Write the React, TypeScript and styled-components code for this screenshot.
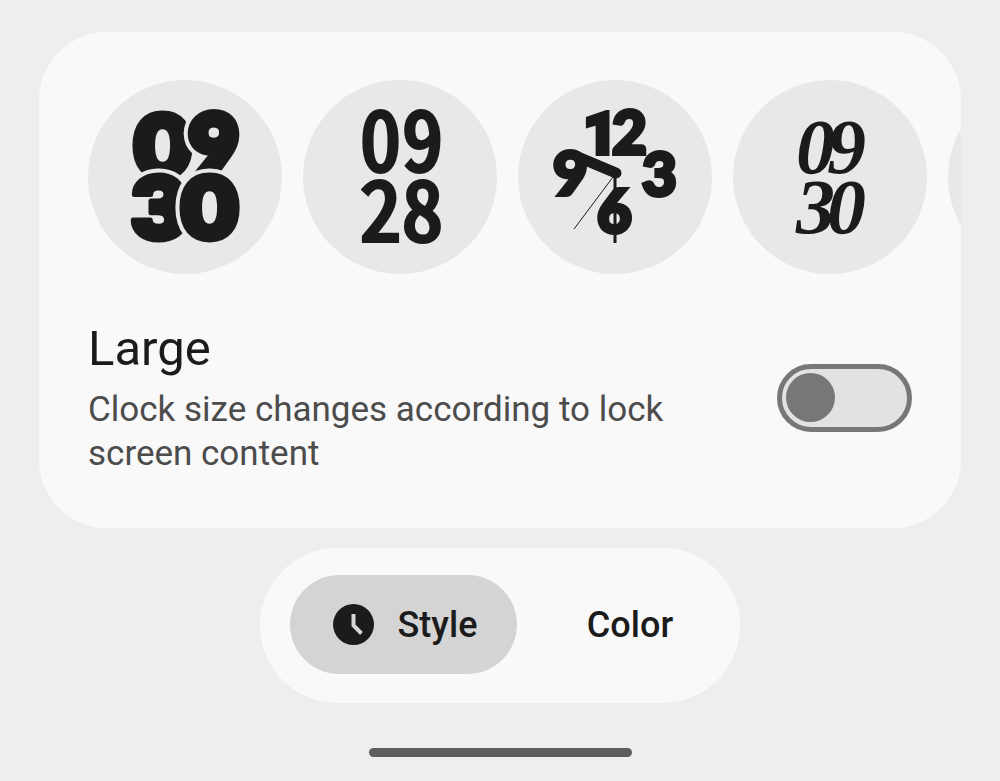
import React, { useState } from "react";
import styled, { createGlobalStyle } from "styled-components";

const INK = "#1b1b1b";
const FACE = "#e8e8e8";

const GlobalStyle = createGlobalStyle`
  *, *::before, *::after { box-sizing: border-box; }
  body {
    margin: 0;
    background: #eeeeee;
    color: ${INK};
    font-family: Roboto, "Liberation Sans", sans-serif;
  }
`;

const Page = styled.main`
  display: flex;
  flex-direction: column;
  align-items: center;
  padding: 32px 39px 24px;
`;

const Card = styled.section`
  width: 100%;
  padding: 48px 0 52px;
  border-radius: 68px;
  background: #f9f9f9;
  overflow: hidden;
`;

const FaceList = styled.div`
  display: flex;
  gap: 21px;
  padding: 0 49px;
  overflow-x: auto;
  scrollbar-width: none;
`;

const FaceButton = styled.button`
  flex: none;
  width: 194px;
  height: 194px;
  padding: 0;
  border: 0;
  border-radius: 50%;
  background: ${FACE};
  cursor: pointer;
`;

const FaceArt = styled.svg`
  display: block;
  width: 100%;
  height: 100%;
  fill: ${INK};
  overflow: visible;
`;

const ChunkyDigit = styled.text<{ $tail?: boolean }>`
  font: 900 86px ${({ $tail }) => ($tail ? "Lato" : "Inter")}, sans-serif;
`;

const TubeText = styled.text`
  font: 400 82px "Noto Sans Mono CJK SC", Roboto, sans-serif;
  stroke: ${INK};
  stroke-width: 4px;
`;

const DialDigit = styled.text<{ $plain?: boolean }>`
  font: 900 60px ${({ $plain }) => ($plain ? "Roboto" : "Lato")}, sans-serif;
  stroke: ${INK};
  stroke-width: 4px;
`;

const ScriptDigit = styled.text`
  font: italic 700 78px "Liberation Serif", serif;
`;

const SizeRow = styled.label`
  display: flex;
  align-items: center;
  justify-content: space-between;
  gap: 48px;
  padding: 0 49px;
  margin-top: 45px;
  cursor: pointer;
`;

const SizeText = styled.span`
  display: flex;
  flex-direction: column;
  max-width: 600px;
`;

const SizeTitle = styled.span`
  font-size: 49px;
  line-height: 60px;
`;

const SizeNote = styled.span`
  margin-top: 9px;
  font-size: 35px;
  line-height: 44px;
  color: #4c4c4c;
`;

const Switch = styled.input`
  appearance: none;
  flex: none;
  display: flex;
  align-items: center;
  width: 135px;
  height: 68px;
  margin: 0;
  padding: 0 4px;
  border: 5px solid #777777;
  border-radius: 34px;
  background: #e2e2e2;
  cursor: pointer;

  &::before {
    content: "";
    width: 49px;
    height: 49px;
    border-radius: 50%;
    background: #777777;
  }

  &:checked {
    justify-content: flex-end;
  }
`;

const TabBar = styled.div`
  display: flex;
  margin-top: 20px;
  padding: 27px 0 29px 30px;
  border-radius: 78px;
  background: #f9f9f9;
`;

const Tab = styled.button<{ $active: boolean }>`
  display: flex;
  align-items: center;
  justify-content: center;
  gap: 24px;
  height: 99px;
  min-width: ${({ $active }) => ($active ? 227 : 223)}px;
  padding: 0 38px 0 41px;
  border: 0;
  border-radius: 50px;
  background: ${({ $active }) => ($active ? "#d4d4d4" : "transparent")};
  color: ${INK};
  font: 500 36px Roboto, "Liberation Sans", sans-serif;
  cursor: pointer;
`;

const TabIcon = styled.svg`
  width: 41px;
  height: 41px;
`;

const HomeBar = styled.div`
  width: 263px;
  height: 9px;
  margin-top: 45px;
  border-radius: 5px;
  background: #5e5e5e;
`;

type ChunkyProps = { x: number; y: number; weight?: number; tail?: boolean; children: string };

function Chunky({ x, y, weight = 5, tail, children }: ChunkyProps) {
  return (
    <g strokeLinejoin="round">
      <ChunkyDigit x={x} y={y} $tail={tail} fill={FACE} stroke={FACE} strokeWidth={weight + 8}>{children}</ChunkyDigit>
      <ChunkyDigit x={x} y={y} $tail={tail} stroke={INK} strokeWidth={weight}>{children}</ChunkyDigit>
    </g>
  );
}

const faces = [
  {
    name: "Chunky",
    art: (
      <>
        <Chunky x={44} y={97}>0</Chunky>
        <Chunky x={101} y={96} weight={9} tail>9</Chunky>
        <Chunky x={42} y={159}>3</Chunky>
        <Chunky x={91} y={159}>0</Chunky>
      </>
    ),
  },
  {
    name: "Tube",
    art: (
      <>
        <TubeText x="57 99" y="91">09</TubeText>
        <TubeText x="57 99" y="161">28</TubeText>
      </>
    ),
  },
  {
    name: "Dial",
    art: (
      <>
        <DialDigit x="65" y="74" $plain>1</DialDigit>
        <DialDigit x="94" y="74">2</DialDigit>
        <DialDigit x="124" y="116">3</DialDigit>
        <DialDigit x="79" y="153">6</DialDigit>
        <DialDigit x="35" y="115">9</DialDigit>
        <path d="M60 77 98 93" stroke={INK} strokeWidth={11} strokeLinecap="round" />
        <path d="M97 94V163" stroke={INK} strokeWidth={3} />
        <path d="M95 97 56 149" stroke={INK} strokeWidth={1} />
      </>
    ),
  },
  {
    name: "Script",
    art: (
      <>
        <ScriptDigit x="63 94" y="93">09</ScriptDigit>
        <ScriptDigit x="63 94" y="153">30</ScriptDigit>
      </>
    ),
  },
  { name: "More", art: null },
];

export default function App() {
  const [tab, setTab] = useState("Style");
  return (
    <>
      <GlobalStyle />
      <Page>
        <Card>
          <FaceList>
            {faces.map(({ name, art }) => (
              <FaceButton key={name} type="button" aria-label={`${name} clock face`}>
                <FaceArt viewBox="0 0 194 194" aria-hidden="true">{art}</FaceArt>
              </FaceButton>
            ))}
          </FaceList>
          <SizeRow htmlFor="clock-size">
            <SizeText>
              <SizeTitle>Large</SizeTitle>
              <SizeNote>Clock size changes according to lock screen content</SizeNote>
            </SizeText>
            <Switch id="clock-size" type="checkbox" role="switch" />
          </SizeRow>
        </Card>
        <TabBar role="tablist">
          <Tab type="button" role="tab" $active={tab === "Style"} aria-selected={tab === "Style"} onClick={() => setTab("Style")}>
            <TabIcon viewBox="0 0 41 41" aria-hidden="true">
              <circle cx="20.5" cy="20.5" r="20.5" fill={INK} />
              <path d="M20.5 10V21.5L28.5 29.5" fill="none" stroke="#d4d4d4" strokeWidth="4" />
            </TabIcon>
            Style
          </Tab>
          <Tab type="button" role="tab" $active={tab === "Color"} aria-selected={tab === "Color"} onClick={() => setTab("Color")}>
            Color
          </Tab>
        </TabBar>
        <HomeBar />
      </Page>
    </>
  );
}
